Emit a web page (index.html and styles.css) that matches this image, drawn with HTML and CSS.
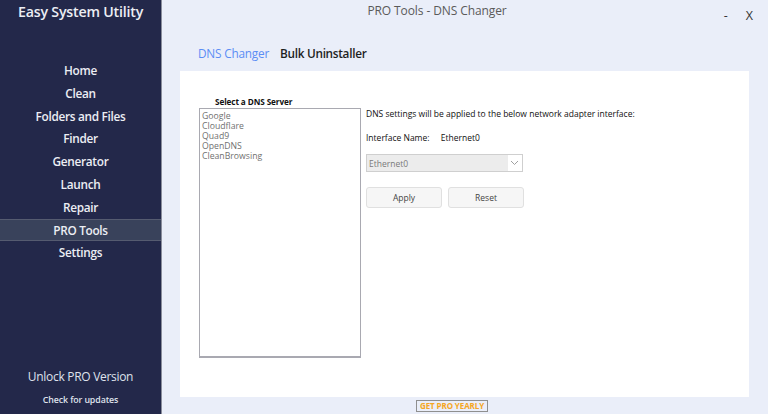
FILE: index.html
```html
<!DOCTYPE html>
<html lang="en">
<head>
    <meta charset="UTF-8">
    <meta name="viewport" content="width=device-width, initial-scale=1.0">
    <title>Easy System Utility</title>
    <link rel="stylesheet" href="styles.css">
</head>
<body>
    <!-- Sidebar -->
    <div class="sidebar">
        <h1 class="app-title">Easy System Utility</h1>
        <nav class="nav">
            <a href="#">Home</a>
            <a href="#">Clean</a>
            <a href="#">Folders and Files</a>
            <a href="#">Finder</a>
            <a href="#">Generator</a>
            <a href="#">Launch</a>
            <a href="#">Repair</a>
            <a href="#" class="active">PRO Tools</a>
            <a href="#">Settings</a>
        </nav>
        <div class="sidebar-bottom">
            <a href="#" class="unlock">Unlock PRO Version</a>
            <a href="#" class="updates">Check for updates</a>
        </div>
    </div>

    <!-- Main Section -->
    <div class="main">
        <div class="titlebar">
            <span class="window-title">PRO Tools - DNS Changer</span>
            <div class="window-buttons">
                <span class="min">-</span>
                <span class="close">X</span>
            </div>
        </div>
        <div class="tabs">
            <a href="#" class="tab active">DNS Changer</a>
            <a href="#" class="tab">Bulk Uninstaller</a>
        </div>
        <div class="panel">
            <div class="server-col">
                <div class="server-label">Select a DNS Server</div>
                <ul class="server-list">
                    <li>Google</li>
                    <li>Cloudflare</li>
                    <li>Quad9</li>
                    <li>OpenDNS</li>
                    <li>CleanBrowsing</li>
                </ul>
            </div>
            <div class="settings-col">
                <p class="info">DNS settings will be applied to the below network adapter interface:</p>
                <p class="iface"><span class="iface-label">Interface Name:</span> Ethernet0</p>
                <div class="select">
                    <span>Ethernet0</span>
                    <svg width="9" height="6" viewBox="0 0 9 6"><path d="M1 1l3.5 3.5L8 1" fill="none" stroke="#a0a0a0" stroke-width="1"/></svg>
                </div>
                <div class="buttons">
                    <button type="button">Apply</button>
                    <button type="button">Reset</button>
                </div>
            </div>
        </div>
        <div class="footer">
            <a href="#" class="get-pro">GET PRO YEARLY</a>
        </div>
    </div>
</body>
</html>
```

FILE: styles.css
```css
body {
    font-family: "Open Sans", "Noto Sans", sans-serif;
    margin: 0;
    padding: 0;
    width: 768px;
    height: 414px;
    display: flex;
    overflow: hidden;
    background: #eaeef9;
}
.sidebar {
    width: 161px;
    flex-shrink: 0;
    background: #23284a;
    border-right: 1px solid #8a8d9c;
    display: flex;
    flex-direction: column;
    color: #eceef4;
}
.app-title {
    margin: 2px 0 0;
    font-size: 14.2px;
    font-weight: 600;
    text-align: center;
    line-height: 20px;
    letter-spacing: -0.2px;
}
.nav {
    display: flex;
    flex-direction: column;
    margin-top: 37px;
}
.nav a {
    color: #eceef4;
    text-decoration: none;
    text-align: center;
    font-size: 11.8px;
    font-weight: 600;
    line-height: 22.8px;
    height: 22.8px;
    letter-spacing: -0.3px;
}
.nav a.active {
    background: #39425b;
    border-top: 1px solid #555b70;
    border-bottom: 1px solid #555b70;
    height: 20.8px;
    line-height: 20.8px;
}
.sidebar-bottom {
    margin-top: auto;
    display: flex;
    flex-direction: column;
    align-items: center;
    padding-bottom: 7px;
}
.unlock {
    color: #dfe2ec;
    text-decoration: none;
    font-size: 12px;
    letter-spacing: -0.3px;
    line-height: 18px;
}
.updates {
    color: #dfe2ec;
    text-decoration: none;
    font-size: 8.8px;
    font-weight: 600;
    margin-top: 7px;
    line-height: 14px;
    letter-spacing: -0.1px;
}
.main {
    flex: 1;
    display: flex;
    flex-direction: column;
}
.titlebar {
    height: 34px;
    display: flex;
    justify-content: center;
    position: relative;
}
.window-title {
    font-size: 12px;
    color: #5a5a5a;
    line-height: 22px;
    margin-right: 56px;
    letter-spacing: -0.1px;
}
.window-buttons {
    position: absolute;
    right: 15px;
    top: 6px;
    display: flex;
    gap: 18px;
    font-size: 12.5px;
    color: #333;
    line-height: 20px;
}
.tabs {
    display: flex;
    gap: 11px;
    padding-left: 36px;
    height: 37px;
    align-items: center;
}
.tab {
    text-decoration: none;
    font-size: 11.8px;
    font-weight: 600;
    color: #1e1e1e;
    letter-spacing: -0.3px;
}
.tab.active {
    color: #5b8df5;
    font-weight: 400;
    letter-spacing: -0.2px;
}
.panel {
    margin-left: 18px;
    width: 569px;
    height: 326px;
    background: #fff;
    display: flex;
    padding: 25px 0 0 19px;
    box-sizing: border-box;
}
.server-col {
    width: 162px;
}
.server-label {
    font-size: 8.2px;
    font-weight: 700;
    color: #111;
    padding-left: 16px;
    line-height: 12px;
    letter-spacing: -0.1px;
}
.server-list {
    list-style: none;
    margin: 0;
    padding: 3px 2px 0;
    height: 250px;
    box-sizing: border-box;
    border: 1px solid #a9a9b1;
    border-bottom-width: 2px;
    font-size: 8.7px;
    color: #707070;
    line-height: 9.9px;
}
.server-list li {
    height: 9.9px;
}
.settings-col {
    padding-left: 5px;
    padding-top: 12px;
    font-size: 8.5px;
    color: #111;
}
.info {
    margin: 0;
    line-height: 12px;
}
.iface {
    margin: 12px 0 0;
    line-height: 12px;
}
.iface-label {
    margin-right: 9px;
}
.select {
    margin-top: 10px;
    width: 157px;
    height: 18px;
    box-sizing: border-box;
    border: 1px solid #cfcfcf;
    background: linear-gradient(to right, #ececec 141px, #fff 141px);
    display: flex;
    align-items: center;
    justify-content: space-between;
    padding: 0 3px 0 2px;
    color: #7a7a7a;
}
.buttons {
    display: flex;
    gap: 6px;
    margin-top: 15px;
}
.buttons button {
    width: 76px;
    height: 21px;
    border: 1px solid #e0e0e0;
    border-radius: 3px;
    background: #f6f6f6;
    font-family: inherit;
    font-size: 8.5px;
    color: #444;
    cursor: pointer;
}
.footer {
    display: flex;
    justify-content: center;
    padding-top: 3px;
    padding-right: 26px;
}
.get-pro {
    text-decoration: none;
    font-size: 8px;
    font-weight: 700;
    color: #f5a623;
    border: 1px solid #8f8f8f;
    padding: 0 3px;
    line-height: 10px;
    letter-spacing: -0.1px;
}
```
